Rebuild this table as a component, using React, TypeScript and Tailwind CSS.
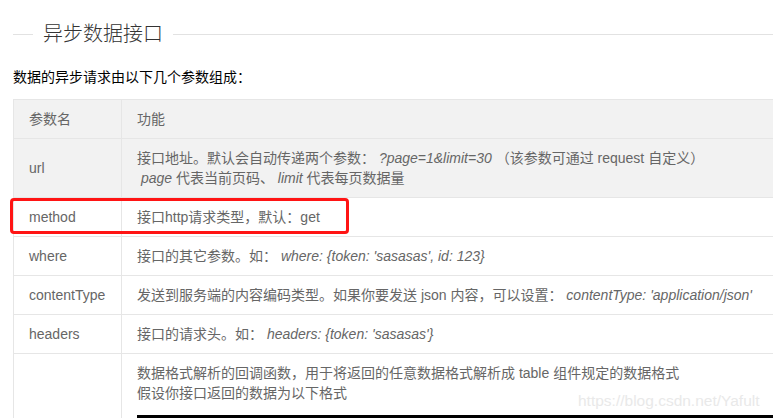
const rows = [
  {
    name: 'url',
    gray: true,
    desc: (
      <>
        <div>
          接口地址。默认会自动传递两个参数： <em>?page=1&amp;limit=30</em> （该参数可通过 request 自定义）
        </div>
        <div>
          &nbsp;<em>page</em> 代表当前页码、 <em>limit</em> 代表每页数据量
        </div>
      </>
    ),
  },
  {
    name: 'method',
    desc: <>接口http请求类型，默认：get</>,
  },
  {
    name: 'where',
    desc: (
      <>
        接口的其它参数。如： <em>where: {"{token: 'sasasas', id: 123}"}</em>
      </>
    ),
  },
  {
    name: 'contentType',
    desc: (
      <>
        发送到服务端的内容编码类型。如果你要发送 json 内容，可以设置： <em>contentType: 'application/json'</em>
      </>
    ),
  },
  {
    name: 'headers',
    desc: (
      <>
        接口的请求头。如： <em>headers: {"{token: 'sasasas'}"}</em>
      </>
    ),
  },
];

export default function App() {
  return (
    <div
      className="relative w-[773px] h-[418px] overflow-hidden bg-white"
      style={{ fontFamily: '"Liberation Sans", "Noto Sans CJK SC", sans-serif' }}
    >
      {/* Field title */}
      <div className="flex items-center pt-[20px] pl-[13px]">
        <div className="w-[20px] h-px bg-[#e2e2e2]"></div>
        <span className="px-[10px] text-[20px] leading-[28px] font-light text-[#333]">异步数据接口</span>
        <div className="flex-1 h-px bg-[#e2e2e2]"></div>
      </div>

      <p className="pl-[13px] mt-[19px] text-[14px] leading-[20px] text-black">数据的异步请求由以下几个参数组成：</p>

      <div className="relative ml-[13px] mt-[12px] w-[820px]">
        <table className="w-full border-collapse text-[14px] leading-[20px] text-[#666]">
          <thead>
            <tr className="bg-[#f2f2f2]">
              <th className="w-[108px] border border-[#e6e6e6] px-[15px] py-[9px] text-left font-normal">参数名</th>
              <th className="border border-[#e6e6e6] px-[15px] py-[9px] text-left font-normal">功能</th>
            </tr>
          </thead>
          <tbody>
            {rows.map((r) => (
              <tr key={r.name} className={r.gray ? 'bg-[#f2f2f2]' : ''}>
                <td className="border border-[#e6e6e6] px-[15px] py-[9px] align-middle">{r.name}</td>
                <td className="border border-[#e6e6e6] px-[15px] py-[9px] whitespace-nowrap">{r.desc}</td>
              </tr>
            ))}
            <tr>
              <td className="border border-[#e6e6e6] px-[15px] py-[9px]"></td>
              <td className="border border-[#e6e6e6] px-[15px] py-[9px]">
                <div>数据格式解析的回调函数，用于将返回的任意数据格式解析成 table 组件规定的数据格式</div>
                <div>假设你接口返回的数据为以下格式</div>
                <div className="mt-[12px] h-[80px] bg-black"></div>
              </td>
            </tr>
          </tbody>
        </table>

        {/* red annotation box */}
        <div className="absolute left-[-3px] top-[99px] w-[339px] h-[36px] border-[3px] border-[#ff1414] rounded-[4px]"></div>
      </div>

      {/* watermark */}
      <div className="absolute left-[578px] top-[391px] text-[15.5px] leading-[20px] text-[#e9e9e9]">
        https://blog.csdn.net/Yafult
      </div>
    </div>
  );
}
